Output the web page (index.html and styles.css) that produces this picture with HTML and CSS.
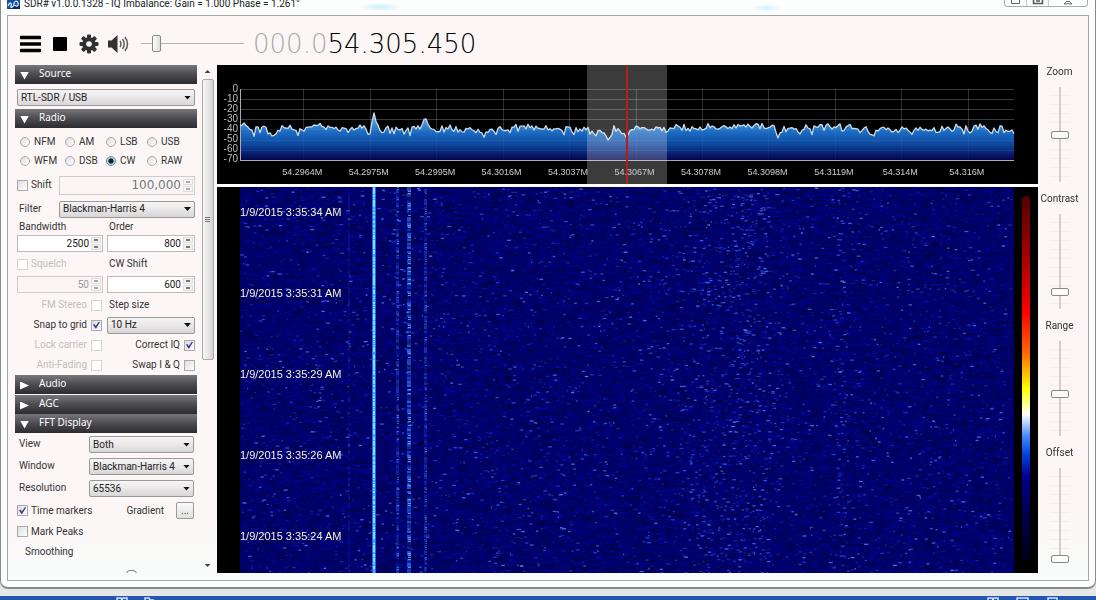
FILE: index.html
```html
<!DOCTYPE html>
<html lang="en">
<head>
<meta charset="utf-8">
<title>SDR#</title>
<link rel="stylesheet" href="styles.css">
</head>
<body>
<div class="window">
  <header class="titlebar">
    <svg class="app-icon" width="13" height="9" viewBox="0 0 13 9" aria-hidden="true"><rect width="13" height="9" fill="#164c9c"/><path d="M0 9L13 4V9Z" fill="#0b2c70"/><path d="M1 6c2-5 4-3 3 0s3 1 3-2 3-4 4-1-2 4-3 2" fill="none" stroke="#d8edff" stroke-width="1.3"/></svg>
    <h1 class="title">SDR# v1.0.0.1328 - IQ Imbalance: Gain = 1.000 Phase = 1.261°</h1>
    <div class="captions">
      <button aria-label="Minimize"><svg width="12" height="6" viewBox="0 0 12 6"><path d="M1.500 0V3.500H9.500V0" fill="#fff" stroke="#666"/></svg></button>
      <button aria-label="Restore"><svg width="12" height="6" viewBox="0 0 12 6"><path d="M1.500 0V3.500H10.500V0M4 1H8" fill="none" stroke="#555" stroke-width="1.500"/></svg></button>
      <button class="close" aria-label="Close"><svg width="12" height="6" viewBox="0 0 12 6"><path d="M2 4L5 1L6 2L7 1L10 4H7L6 3L5 4Z" fill="#fff" stroke="#666"/></svg></button>
    </div>
  </header>
  <main class="client">
    <div class="toolbar">
      <button aria-label="Menu"><svg width="21" height="18" viewBox="0 0 21 18"><path d="M1 2.500H20M1 9H20M1 15.500H20" stroke="#000" stroke-width="3.500" stroke-linecap="round"/></svg></button>
      <button aria-label="Stop"><svg width="14" height="14" viewBox="0 0 14 14"><rect width="14" height="14" rx="1" fill="#000"/></svg></button>
      <button aria-label="Settings"><svg width="20" height="20" viewBox="-10 -10 20 20"><g fill="#303030"><circle r="6.800"/><g id="teeth"><rect x="-2" y="-9.500" width="4" height="19" rx="1"/><rect x="-9.500" y="-2" width="19" height="4" rx="1"/></g><use href="#teeth" transform="rotate(45)"/></g><circle r="2.800" fill="#fcf7f6"/></svg></button>
      <button aria-label="Mute"><svg width="22" height="20" viewBox="0 0 22 20"><path d="M1 6.500H4.500L10.500 1V19L4.500 13.500H1Z" fill="#333"/><path d="M13 7q2 3 0 6M15.500 5q3.500 5 0 10M18 3q5 7 0 14" fill="none" stroke="#555" stroke-width="1.400"/></svg></button>
      <input class="volume" type="range" min="0" max="100" value="12" aria-label="Volume">
      <output class="frequency"><span class="leading">000.0</span>54.305.450</output>
    </div>
    <div class="workspace">
      <div class="panel">
        <h2 class="section"><span class="arrow down"></span>Source</h2>
        <div class="body source">
          <span class="select"><select aria-label="Source"><option>RTL-SDR / USB</option></select></span>
        </div>
        <h2 class="section"><span class="arrow down"></span>Radio</h2>
        <div class="body radio">
          <div class="modes">
            <label><input type="radio" name="mode">NFM</label>
            <label><input type="radio" name="mode">AM</label>
            <label><input type="radio" name="mode">LSB</label>
            <label><input type="radio" name="mode">USB</label>
            <label><input type="radio" name="mode">WFM</label>
            <label><input type="radio" name="mode">DSB</label>
            <label><input type="radio" name="mode" checked>CW</label>
            <label><input type="radio" name="mode">RAW</label>
          </div>
          <div class="pair shift">
            <label><input type="checkbox">Shift</label>
            <span class="number large off"><input type="text" value="100,000" aria-label="Shift amount" disabled><span class="spin"><button aria-label="Up"></button><button aria-label="Down"></button></span></span>
          </div>
          <div class="pair filter">
            <label for="filter">Filter</label>
            <span class="select"><select id="filter"><option>Blackman-Harris 4</option></select></span>
          </div>
          <div class="halves">
            <label class="line" for="bandwidth">Bandwidth</label>
            <label class="line" for="order">Order</label>
            <span class="number"><input id="bandwidth" type="text" value="2500"><span class="spin"><button aria-label="Up"></button><button aria-label="Down"></button></span></span>
            <span class="number"><input id="order" type="text" value="800"><span class="spin"><button aria-label="Up"></button><button aria-label="Down"></button></span></span>
            <label class="line tall dim"><input type="checkbox" disabled>Squelch</label>
            <label class="line tall" for="cwshift">CW Shift</label>
            <span class="number off"><input type="text" value="50" aria-label="Squelch level" disabled><span class="spin"><button aria-label="Up"></button><button aria-label="Down"></button></span></span>
            <span class="number"><input id="cwshift" type="text" value="600"><span class="spin"><button aria-label="Up"></button><button aria-label="Down"></button></span></span>
          </div>
          <div class="halves options">
            <label class="end dim">FM Stereo<input type="checkbox" disabled></label>
            <label for="step">Step size</label>
            <label class="end">Snap to grid<input type="checkbox" checked></label>
            <span class="select"><select id="step"><option>10 Hz</option></select></span>
            <label class="end dim">Lock carrier<input type="checkbox" disabled></label>
            <label class="end">Correct IQ<input type="checkbox" checked></label>
            <label class="end dim">Anti-Fading<input type="checkbox" disabled></label>
            <label class="end">Swap I &amp; Q<input type="checkbox"></label>
          </div>
        </div>
        <h2 class="section"><span class="arrow right"></span>Audio</h2>
        <h2 class="section"><span class="arrow right"></span>AGC</h2>
        <h2 class="section"><span class="arrow down"></span>FFT Display</h2>
        <div class="body fft">
          <div class="pair"><label for="view">View</label><span class="select"><select id="view"><option>Both</option></select></span></div>
          <div class="pair"><label for="window">Window</label><span class="select"><select id="window"><option>Blackman-Harris 4</option></select></span></div>
          <div class="pair"><label for="resolution">Resolution</label><span class="select"><select id="resolution"><option>65536</option></select></span></div>
          <div class="gradient-row"><label><input type="checkbox" checked>Time markers</label><span class="gradient-label" id="gradient">Gradient</span><button class="more" aria-labelledby="gradient">...</button></div>
          <label class="peaks"><input type="checkbox">Mark Peaks</label>
          <label class="smoothing" for="smooth">Smoothing</label>
          <input class="smooth" id="smooth" type="range" value="68">
        </div>
      </div>
      <div class="scrollbar" aria-hidden="true"><span class="arrow tiny up"></span><div class="scroll-thumb"><i></i><i></i><i></i></div><span class="arrow tiny down"></span></div>
      <div class="plots">
        <div class="spectrum">
          <canvas id="spectrum"></canvas>
          <div class="levels"><span>0</span><span>-10</span><span>-20</span><span>-30</span><span>-40</span><span>-50</span><span>-60</span><span>-70</span></div>
          <div class="freqs"><span>54.2964M</span><span>54.2975M</span><span>54.2995M</span><span>54.3016M</span><span>54.3037M</span><span>54.3067M</span><span>54.3078M</span><span>54.3098M</span><span>54.3119M</span><span>54.314M</span><span>54.316M</span></div>
        </div>
        <div class="waterfall">
          <canvas id="waterfall"></canvas>
          <div class="times"><time>1/9/2015 3:35:34 AM</time><time>1/9/2015 3:35:31 AM</time><time>1/9/2015 3:35:29 AM</time><time>1/9/2015 3:35:26 AM</time><time>1/9/2015 3:35:24 AM</time></div>
          <div class="scale"></div>
        </div>
      </div>
      <div class="sliders">
        <label>Zoom<input type="range" value="50"></label>
        <label>Contrast<input type="range" value="15"></label>
        <label>Range<input type="range" value="44"></label>
        <label>Offset<input type="range" value="0"></label>
      </div>
    </div>
  </main>
</div>
<footer class="taskbar">
  <svg width="40" height="5" viewBox="0 0 40 5" aria-hidden="true"><path d="M2 5V2H6L7 4L8 2H12V5M30 4V2H34L35 4H39" fill="none" stroke="#cfe4ff" stroke-width="1.500"/></svg>
  <svg width="76" height="5" viewBox="0 0 76 5" aria-hidden="true"><path d="M2 5V2H6L7 4L8 2H12V5M31 5V2H42V5M62 5V2H71V5" fill="none" stroke="#cfe4ff" stroke-width="1.500"/></svg>
</footer>
<script src="plots.js"></script>
</body>
</html>
```

FILE: styles.css
```css
* { box-sizing: border-box; }

body {
  margin: 0;
  min-height: 100vh;
  display: flex;
  flex-direction: column;
  background: #e4e6e7;
  color: #333;
  font: 10px/12px Roboto, "Liberation Sans", sans-serif;
}

button, input, select { font: inherit; color: inherit; margin: 0; padding: 0; }
button { border: 0; background: none; }

.window {
  flex: 1;
  display: flex;
  flex-direction: column;
  margin-bottom: 7px;
  padding: 0 6px 6px;
  background: #fcfefe;
  border: 1px solid #858b8b;
  border-width: 0 1px 2px;
  border-radius: 0 0 8px 8px;
}

.titlebar { display: flex; height: 15px; align-items: flex-start; background: radial-gradient(ellipse 22px 4px at 374px 7px, #c9edff, transparent), radial-gradient(ellipse 16px 4px at 759px 8px, #d3f2ff, transparent); }
.app-icon { display: block; }
.title { flex: 1; margin: 0 0 0 4px; font: 400 10px/7px Roboto, sans-serif; color: #222; white-space: nowrap; }
.captions { display: flex; margin-right: 1px; border: 1px solid #aaa; border-top: 0; border-radius: 0 0 4px 4px; }
.captions button { width: 22px; height: 6px; display: flex; justify-content: center; border-right: 1px solid #ccc; }
.captions .close { width: 38px; border: 0; }

.client {
  flex: 1;
  display: flex;
  flex-direction: column;
  padding: 0 1px 7px 7px;
  border: 1px solid #a5a5a5;
  background: linear-gradient(#fcf7f6 88%, #f8fcfb);
}

.toolbar { display: flex; align-items: center; height: 49px; padding: 6px 0 0 5px; }
.toolbar button { display: flex; margin-right: 12px; }
.toolbar button:nth-of-type(3) { margin-right: 8px; }

input[type="range"] { appearance: none; background: none; }
.volume { width: 103px; height: 18px; }
.volume::-webkit-slider-runnable-track { height: 1px; background: #b7b3b3; }
.volume::-webkit-slider-thumb { appearance: none; width: 9px; height: 17px; margin-top: -8px; border: 1px solid #888; border-radius: 2px; background: linear-gradient(90deg, #fff, #ddd); }
.frequency { margin-left: 9px; font: 200 26px/30px "DejaVu Sans", "DejaVu Sans Light", sans-serif; color: #000; }
.leading { color: #aaa; }

.workspace { flex: 1; display: grid; grid-template-columns: 182px 20px minmax(0, 1fr) 49px; }

.panel { display: flex; flex-direction: column; height: 508px; overflow: hidden; color: #333; }
.section {
  flex: none;
  display: flex;
  align-items: center;
  height: 19px;
  margin: 0 0 1px;
  padding: 0 0 3px 5px;
  font: 400 10px/16px "Noto Sans", sans-serif;
  color: #fff;
  background: linear-gradient(#77777b, #4b4b50 50%, #2b2b30);
}
.arrow { width: 9px; height: 8px; margin: 5px 10px 0 0; background: #fff; }
.arrow.down { clip-path: polygon(0 0, 100% 0, 50% 100%); }
.arrow.right { clip-path: polygon(0 0, 100% 50%, 0 100%); }
.arrow.up { clip-path: polygon(50% 0, 100% 100%, 0 100%); }

.body { flex: none; padding: 0 2px; }
.source { padding-top: 4px; height: 24px; }

.select { display: grid; align-items: center; height: 17px; min-width: 0; }
.select select, .select::after { grid-area: 1 / 1; }
.select select { appearance: none; width: 100%; height: 17px; padding: 0 3px; color: #222; border: 1px solid #999; border-radius: 2px; background: linear-gradient(#f6f5f5, #e9e7e7 50%, #d8d6d6); }
.select::after { content: ""; justify-self: end; width: 7px; height: 4px; margin-right: 4px; background: #111; clip-path: polygon(0 0, 100% 0, 50% 100%); pointer-events: none; }

label { display: flex; align-items: center; white-space: nowrap; }
.dim { color: #c2bebe; }
input[type="radio"], input[type="checkbox"] { appearance: none; flex: none; width: 11px; height: 11px; border: 1px solid #aaa; background: linear-gradient(135deg, #ddd, #fff); }
input[type="radio"] { width: 10px; height: 10px; margin-right: 4px; border-radius: 50%; }
input[type="radio"]:checked { border-color: #789; background: radial-gradient(circle, #123 0 2px, #8cc 3px, #fff 5px); }
input[type="checkbox"] { display: grid; place-items: center; margin-right: 3px; }
input[type="checkbox"]:disabled { border-color: #d8d4d4; background: #fff; }
input[type="checkbox"]:checked::before { content: ""; width: 7px; height: 7px; background: #3a3c86; clip-path: polygon(0 45%, 20% 35%, 40% 65%, 85% 0, 100% 8%, 45% 100%, 35% 100%); }
.end { justify-content: flex-end; }
.end input[type="checkbox"] { margin: 0 0 0 4px; }

.modes { display: grid; grid-template-columns: 45px 41px 41px auto; grid-auto-rows: 19px; padding: 3px 0 5px 3px; }
.pair { display: grid; align-items: center; }
.shift, .filter { grid-template-columns: 42px 1fr; }
.shift { height: 20px; margin-bottom: 5px; }
.filter { height: 18px; }
.pair > label[for] { padding-left: 2px; }

.number { display: flex; align-items: center; height: 17px; min-width: 0; padding-right: 1px; border: 1px solid #bbb; background: #fff; }
.number input { flex: 1; min-width: 0; border: 0; background: none; text-align: right; color: #222; }
.number.large { height: 19px; font: 12px/14px "DejaVu Sans", sans-serif; }
.number.off { background: #fbf6f5; border-color: #d0cccc; }
.number.off input { color: #999; }
.number.large.off input { color: #777; }
.spin { display: grid; gap: 1px; margin-left: 2px; }
.spin button { width: 10px; height: 6px; border: 1px solid #ddd; background: linear-gradient(#777, #777) center / 4px 2px no-repeat, #f2f2f2; }
.off .spin button { background: linear-gradient(#aaa, #aaa) center / 4px 2px no-repeat, #f8f8f8; }

.halves { display: grid; grid-template-columns: 86px 1fr; column-gap: 4px; }
.line { height: 17px; padding-left: 2px; }
.line.tall { height: 24px; }
.line:has(input) { padding-left: 0; }
.options { grid-auto-rows: 20px; align-items: center; padding-top: 2px; }
.options label[for] { padding-left: 2px; }
.options .end:nth-child(odd) { padding-right: 1px; }
.radio { height: 246px; }

.fft { display: flex; flex-direction: column; padding-top: 3px; }
.section ~ .section + .section { margin-bottom: 0; }
.fft .pair { grid-template-columns: 72px 1fr; height: 22px; padding-right: 1px; align-items: start; }
.fft .pair label { line-height: 16px; }
.gradient-row { display: flex; align-items: center; height: 17px; }
.gradient-label { margin-left: auto; margin-right: 12px; }
.more { width: 18px; height: 17px; border: 1px solid #999; border-radius: 2px; background: linear-gradient(#fafafa, #e2e0e0); margin-right: 1px; }
.peaks { height: 25px; }
.smoothing { height: 15px; padding-left: 8px; }
.smooth { width: 166px; height: 18px; margin: 10px 0 0 4px; }
.smooth::-webkit-slider-thumb { appearance: none; width: 11px; height: 17px; border: 1px solid #777; border-radius: 4px; background: #fff; }

.scrollbar { display: flex; flex-direction: column; align-items: center; width: 13px; height: 508px; margin-left: 4px; }
.arrow.tiny { width: 6px; height: 3px; margin: 5px 0 6px; background: #444; }
.scroll-thumb { display: flex; flex-direction: column; justify-content: center; align-items: center; gap: 1px; width: 12px; height: 281px; margin-bottom: auto; border: 1px solid #aaa; border-radius: 2px; background: linear-gradient(90deg, #f6f6f6, #e5e3e3 60%, #cfcdcd); }
.scroll-thumb i { width: 5px; height: 1px; background: #777; }

.plots { display: grid; grid-template-rows: 119px 1fr; row-gap: 3px; background: #fff; }
.spectrum, .waterfall { display: grid; min-width: 0; background: #000; }
.spectrum > *, .waterfall > * { grid-area: 1 / 1; min-width: 0; }
canvas { display: block; width: 100%; height: 100%; contain: size; }
.levels { display: flex; flex-direction: column; width: 21px; padding-top: 19px; text-align: right; line-height: 10px; color: #bbb; font-family: "Liberation Sans", sans-serif; }
.freqs { align-self: end; display: grid; grid-template-columns: repeat(11, 1fr); padding: 0 38px 6px 52px; text-align: center; color: #ccc; font: 9px/12px "Liberation Sans", sans-serif; }
.times { display: flex; flex-direction: column; gap: 69px; padding: 19px 0 0 23px; color: #f2f2d8; font: 11px/12px "Liberation Sans", sans-serif; }
.scale {
  justify-self: end;
  width: 8px;
  margin: 9px 8px 13px 0;
  border-radius: 4px 4px 0 0;
  background: linear-gradient(#500, #a00 18%, #f00 32%, #f60 43%, #ff0 53%, #fff 60%, #48f 66%, #04d 71%, #000090 77%, #000048 88%, #000018);
}

.sliders { display: grid; grid-template-rows: repeat(4, 1fr); }
.sliders label { flex-direction: column; padding: 1px 6px 0 0; }
.sliders input { writing-mode: vertical-lr; direction: rtl; width: 20px; height: 95px; margin-top: 9px; background: repeating-linear-gradient(transparent 0 8px, #f5eeed 8px 9px); }
.sliders input::-webkit-slider-runnable-track { width: 2px; height: 100%; background: #d3cdcc; }
.sliders input::-webkit-slider-thumb { appearance: none; width: 18px; height: 8px; margin-left: -8px; margin-right: -8px; border: 1px solid #888; border-radius: 2px; background: #fafafa; }

.taskbar { display: flex; justify-content: space-between; height: 5px; padding: 0 34px 0 115px; background: #2456ac; }
```

FILE: plots.js
```javascript
function generator(seed) {
  return function () {
    seed = (seed * 1664525 + 1013904223) >>> 0;
    return seed / 4294967296;
  };
}

function prepare(id) {
  const canvas = document.getElementById(id);
  canvas.width = canvas.clientWidth;
  canvas.height = canvas.clientHeight;
  return canvas.getContext("2d");
}

const LEFT = 23;
const RIGHT = 24;

function drawSpectrum() {
  const c = prepare("spectrum");
  const w = c.canvas.width;
  const end = w - RIGHT;
  const span = end - LEFT;
  const random = generator(11);
  const features = { 4: -6, 32: 7, 75: -5, 130: 10, 134: -16, 185: -12, 197: 3, 368: 11, 386: 8, 538: 9, 560: 5, 633: 8, 730: 4 };

  const points = [];
  for (let x = 0; x <= 774; x += 2) {
    let y = 64 + Math.sin(x / 17) * 1 + (random() + random() - 1) * 5;
    if (x > 430 && x < 600) y -= 2;
    if (random() < 0.06) y += 4;
    for (const f in features) {
      const d = Math.abs(x - f);
      if (d < 5) y = y * (d / 5) + (64 + features[f]) * (1 - d / 5);
    }
    points.push([LEFT + x / 774 * span, y]);
  }

  const fill = c.createLinearGradient(0, 56, 0, 95);
  fill.addColorStop(0, "#4c9be0");
  fill.addColorStop(0.25, "#1d70c6");
  fill.addColorStop(0.6, "#0d479e");
  fill.addColorStop(1, "#02034e");
  c.fillStyle = fill;
  c.beginPath();
  c.moveTo(LEFT, 95);
  points.forEach(p => c.lineTo(p[0], p[1]));
  c.lineTo(end, 95);
  c.fill();

  c.fillStyle = "rgba(190,190,190,.3)";
  for (let i = 0; i < 7; i++) {
    c.globalAlpha = i > 3 ? 0.3 : 1;
    c.fillRect(LEFT, 24 + Math.round(i * 10.1), span, 1);
  }
  const step = (w - 90) / 11;
  for (let i = 0; i < 11; i++) {
    const x = Math.round(53 + step * (i + 0.5));
    c.globalAlpha = 0.8;
    c.fillRect(x, 24, 1, 40);
    c.globalAlpha = 0.2;
    c.fillRect(x, 64, 1, 31);
  }
  c.globalAlpha = 1;
  c.fillStyle = "#a9a9b8";
  c.fillRect(LEFT, 95, span, 1);
  c.fillRect(LEFT, 24, 1, 72);

  c.lineWidth = 1.3;
  c.lineJoin = "round";
  c.strokeStyle = "#c9dcec";
  c.beginPath();
  points.forEach(p => c.lineTo(p[0], p[1]));
  c.stroke();

  const tuned = Math.round(LEFT + span * 0.5);
  c.fillStyle = "rgba(255,255,255,.23)";
  c.fillRect(tuned - 40, 0, 80, 119);
  c.fillStyle = "#b51c20";
  c.fillRect(tuned - 1, 0, 2, 119);
}

function drawWaterfall() {
  const c = prepare("waterfall");
  const w = c.canvas.width;
  const h = c.canvas.height;
  const end = w - RIGHT;
  const span = end - LEFT;
  const at = f => LEFT + f / 774 * span;
  const random = generator(77);

  c.fillStyle = "#000068";
  c.fillRect(LEFT, 0, span, h);

  for (let i = 0; i < span * h / 9; i++) {
    const v = random();
    c.fillStyle = v < 0.4 ? "rgba(0,0,50,.34)" : "rgba(0,6,158,.28)";
    c.fillRect(LEFT + random() * (span - 8), Math.floor(random() * h), 3 + random() * 5, 1 + Math.floor(random() * 2));
  }

  function speck(x, y, strength) {
    if (x < LEFT || x > end - 4) return;
    c.fillStyle = `rgba(${30 + 60 * strength},${50 + 90 * strength},${220 + 35 * strength},${0.3 + 0.55 * strength})`;
    c.fillRect(x, y, 1 + random() * 3, 1.3);
  }
  for (let i = 0; i < span * h / 85; i++) speck(LEFT + random() * span, random() * h, Math.pow(random(), 2));

  // Wide, faint signals: centre, half width, number of specks.
  [[480, 75, 480], [510, 22, 180], [601, 10, 120], [466, 8, 60], [300, 60, 110]].forEach(([f, r, n]) => {
    for (let i = 0; i < n; i++) speck(at(f) + (random() + random() - 1) * r, random() * h, random() * 0.9);
  });

  // Narrow carriers: position, width, opacity, colour.
  [[109, 2, 0.18, "60,100,255"], [157, 3, 0.5, "40,105,255"], [169, 4, 0.78, "45,125,255"], [185, 3, 0.45, "50,115,255"]].forEach(([f, size, alpha, rgb]) => {
    const x = Math.round(at(f) - size / 2);
    for (let y = 0; y < h; y += 2) {
      c.fillStyle = `rgba(${rgb},${alpha * random()})`;
      c.fillRect(x, y, size, 2);
      if (random() < alpha * 0.4) {
        c.fillStyle = `rgba(100,180,255,${alpha})`;
        c.fillRect(x + 1, y, size - 1, 1);
      }
    }
  });
  const x = Math.round(at(134));
  for (let y = 0; y < h; y++) {
    c.fillStyle = "#176df0";
    c.fillRect(x - 2, y, 4, 1);
    c.fillStyle = random() < 0.7 ? "#8ddcff" : "#43a5ff";
    c.fillRect(x - 1, y, 2, 1);
  }
}

function draw() {
  drawSpectrum();
  drawWaterfall();
}

draw();
window.addEventListener("resize", draw);
```
